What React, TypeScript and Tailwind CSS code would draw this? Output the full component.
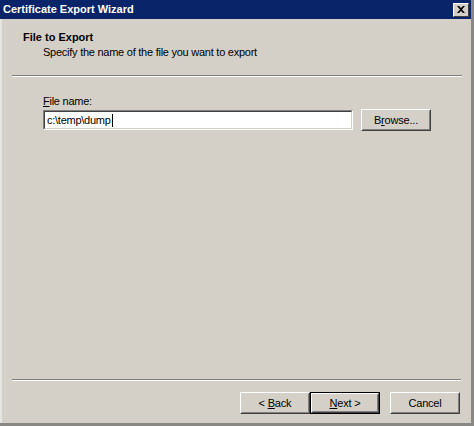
const FONT = "font-['Liberation_Sans',Arial,sans-serif]";

function Etched({ className = "" }: { className?: string }) {
  return <div className={`h-[2px] border-t border-b border-t-[#808080] border-b-white ${className}`} />;
}

function WinButton({
  children,
  width = "w-[70px]",
  isDefault = false,
}: {
  children: React.ReactNode;
  width?: string;
  isDefault?: boolean;
}) {
  const face = (
    <div className="flex h-full w-full items-center justify-center border border-t-white border-l-white border-r-[#404040] border-b-[#404040]">
      <div className="flex h-full w-full items-center justify-center whitespace-pre border border-transparent border-r-[#808080] border-b-[#808080] text-[11px] tracking-[-0.2px] text-black">
        {children}
      </div>
    </div>
  );
  if (isDefault) {
    return <div className={`${width} h-[22px] border border-black bg-[#d4d0c8]`}>{face}</div>;
  }
  return <div className={`${width} h-[22px] bg-[#d4d0c8]`}>{face}</div>;
}

export default function App() {
  return (
    <div className={`${FONT} flex h-[426px] w-[474px] flex-col border-r-[3px] border-b-[3px] border-[#8a8884] bg-[#d4d0c8]`}>
      <div className="flex h-[19px] shrink-0 items-center justify-between bg-[#0a246a] pl-[3px] pr-[2px]">
        <span className="text-[11px] font-bold leading-none text-white">Certificate Export Wizard</span>
        <div className="flex h-[14px] w-[16px] items-center justify-center border border-t-white border-l-white border-r-[#404040] border-b-[#404040] bg-[#d4d0c8]">
          <svg width="8" height="7" viewBox="0 0 8 7">
            <path d="M0 0h2l2 2 2-2h2L5 3.5 8 7H6L4 5 2 7H0l3-3.5z" fill="#000" />
          </svg>
        </div>
      </div>

      <div className="flex flex-1 flex-col border-l-2 border-[#e6e4df] text-[11px] tracking-[-0.25px] text-black">
        <div className="pl-[21px] pt-[12px]">
          <div className="font-bold leading-[13px] tracking-normal">File to Export</div>
          <div className="mt-[2px] pl-[20px] leading-[13px]">
            Specify the name of the file you want to export
          </div>
        </div>

        <Etched className="ml-[10px] mr-[9px] mt-[16px]" />

        <div className="pl-[41px] pt-[18px]">
          <div className="leading-[13px]">
            <span className="underline">F</span>ile name:
          </div>
          <div className="mt-[1px] flex items-start gap-[8px]">
            <div className="mt-[1px] h-[20px] w-[310px] border border-t-[#808080] border-l-[#808080] border-r-white border-b-white">
              <div className="flex h-full w-full items-center border border-t-[#404040] border-l-[#404040] border-r-[#d4d0c8] border-b-[#d4d0c8] bg-white pl-[2px]">
                c:\temp\dump
                <span className="ml-[1px] inline-block h-[13px] w-px bg-black" />
              </div>
            </div>
            <WinButton>
              B<span className="underline">r</span>owse...
            </WinButton>
          </div>
        </div>

        <div className="flex-1" />

        <Etched className="ml-[10px] mr-[10px]" />

        <div className="flex justify-end pb-[9px] pr-[11px] pt-[11px]">
          <WinButton>
            {"< "}
            <span className="underline">B</span>ack
          </WinButton>
          <WinButton isDefault>
            <span className="underline">N</span>
            {"ext >"}
          </WinButton>
          <div className="ml-[10px]">
            <WinButton>Cancel</WinButton>
          </div>
        </div>
      </div>
    </div>
  );
}
